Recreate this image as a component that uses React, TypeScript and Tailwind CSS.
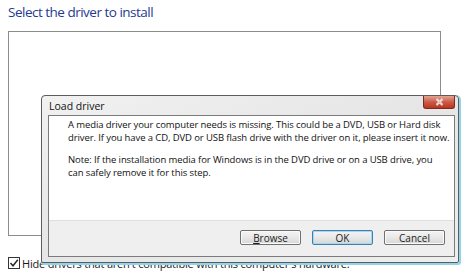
import React from "react";

const Btn = ({ label, accel, primary }: { label: string; accel?: boolean; primary?: boolean }) => (
  <button
    className={`w-[61px] h-[15px] rounded-[2px] border text-[10px] leading-none text-[#1a1a1a] bg-gradient-to-b from-[#f4f4f4] via-[#e8e8e8] to-[#d6d6d6] ${
      primary ? "border-[#3c7fb1] shadow-[inset_0_0_0_1px_#a8d8f0]" : "border-[#707070] shadow-[inset_0_0_0_1px_#fafafa]"
    }`}
  >
    {accel ? (
      <>
        <span className="underline">{label[0]}</span>
        {label.slice(1)}
      </>
    ) : (
      label
    )}
  </button>
);

export default function App() {
  return (
    <div className="relative w-[474px] h-[277px] bg-white overflow-hidden font-['Open_Sans',sans-serif]">
      <h1 className="pl-[8px] pt-[3px] text-[13.5px] leading-[18px] text-[#1e3a8f] tracking-[-0.5px]">
        Select the driver to install
      </h1>
      <div className="ml-[8px] mt-[10px] w-[433px] h-[205px] border border-[#8c8c8c] bg-white" />
      <div className="flex items-center gap-[2px] pl-[8px] mt-[21px]">
        <div className="w-[12px] h-[12px] border border-[#333] flex items-center justify-center bg-white">
          <svg width="10" height="10" viewBox="0 0 10 10">
            <path d="M1.5 5 L4 7.8 L8.8 1.8" fill="none" stroke="#222" strokeWidth="1.4" />
          </svg>
        </div>
        <span className="text-[11px] leading-none text-[#1a1a1a] tracking-[-0.2px]">
          Hide drivers that aren't compatible with this computer's hardware.
        </span>
      </div>

      {/* modal dialog */}
      <div className="absolute left-[41px] top-[95px] w-[418px] h-[168px] rounded-t-[4px] rounded-b-[2px] border border-[#5c5c5c] bg-gradient-to-br from-[#f1f1f1] via-[#e6e6e6] to-[#eeeeee] shadow-[1px_1px_0_1px_#8fd6ea]">
        <div className="flex items-start justify-between h-[19px]">
          <span className="pl-[7px] pt-[4px] text-[10.5px] leading-[12px] text-[#111]">Load driver</span>
          <div className="mr-[3px] w-[32px] h-[13px] rounded-b-[3px] border border-t-0 border-[#7a2a22] bg-gradient-to-b from-[#e3a394] via-[#cc5a45] to-[#b8341f] flex items-center justify-center">
            <svg width="9" height="8" viewBox="0 0 9 8">
              <path d="M1.5 1 L7.5 7 M7.5 1 L1.5 7" stroke="#fff" strokeWidth="2" />
              <path d="M1.5 1 L7.5 7 M7.5 1 L1.5 7" stroke="#8b3a30" strokeWidth="0.4" />
            </svg>
          </div>
        </div>
        <div className="ml-[6px] w-[407px] h-[142px] border border-[#7b7b7b] flex flex-col">
          <div className="h-[105px] bg-white border-b border-[#dfdfdf] pl-[19px] pt-[2px] text-[9.5px] leading-[13px] text-[#111] tracking-[-0.1px]">
            <p>
              A media driver your computer needs is missing. This could be a DVD, USB or Hard disk
              <br />
              driver. If you have a CD, DVD or USB flash drive with the driver on it, please insert it now.
            </p>
            <p className="mt-[9px]">
              Note: If the installation media for Windows is in the DVD drive or on a USB drive, you
              <br />
              can safely remove it for this step.
            </p>
          </div>
          <div className="flex-1 bg-[#efefef] flex justify-end items-start pt-[9px] pr-[9px] gap-[11px]">
            <Btn label="Browse" accel />
            <Btn label="OK" primary />
            <Btn label="Cancel" />
          </div>
        </div>
      </div>
    </div>
  );
}
